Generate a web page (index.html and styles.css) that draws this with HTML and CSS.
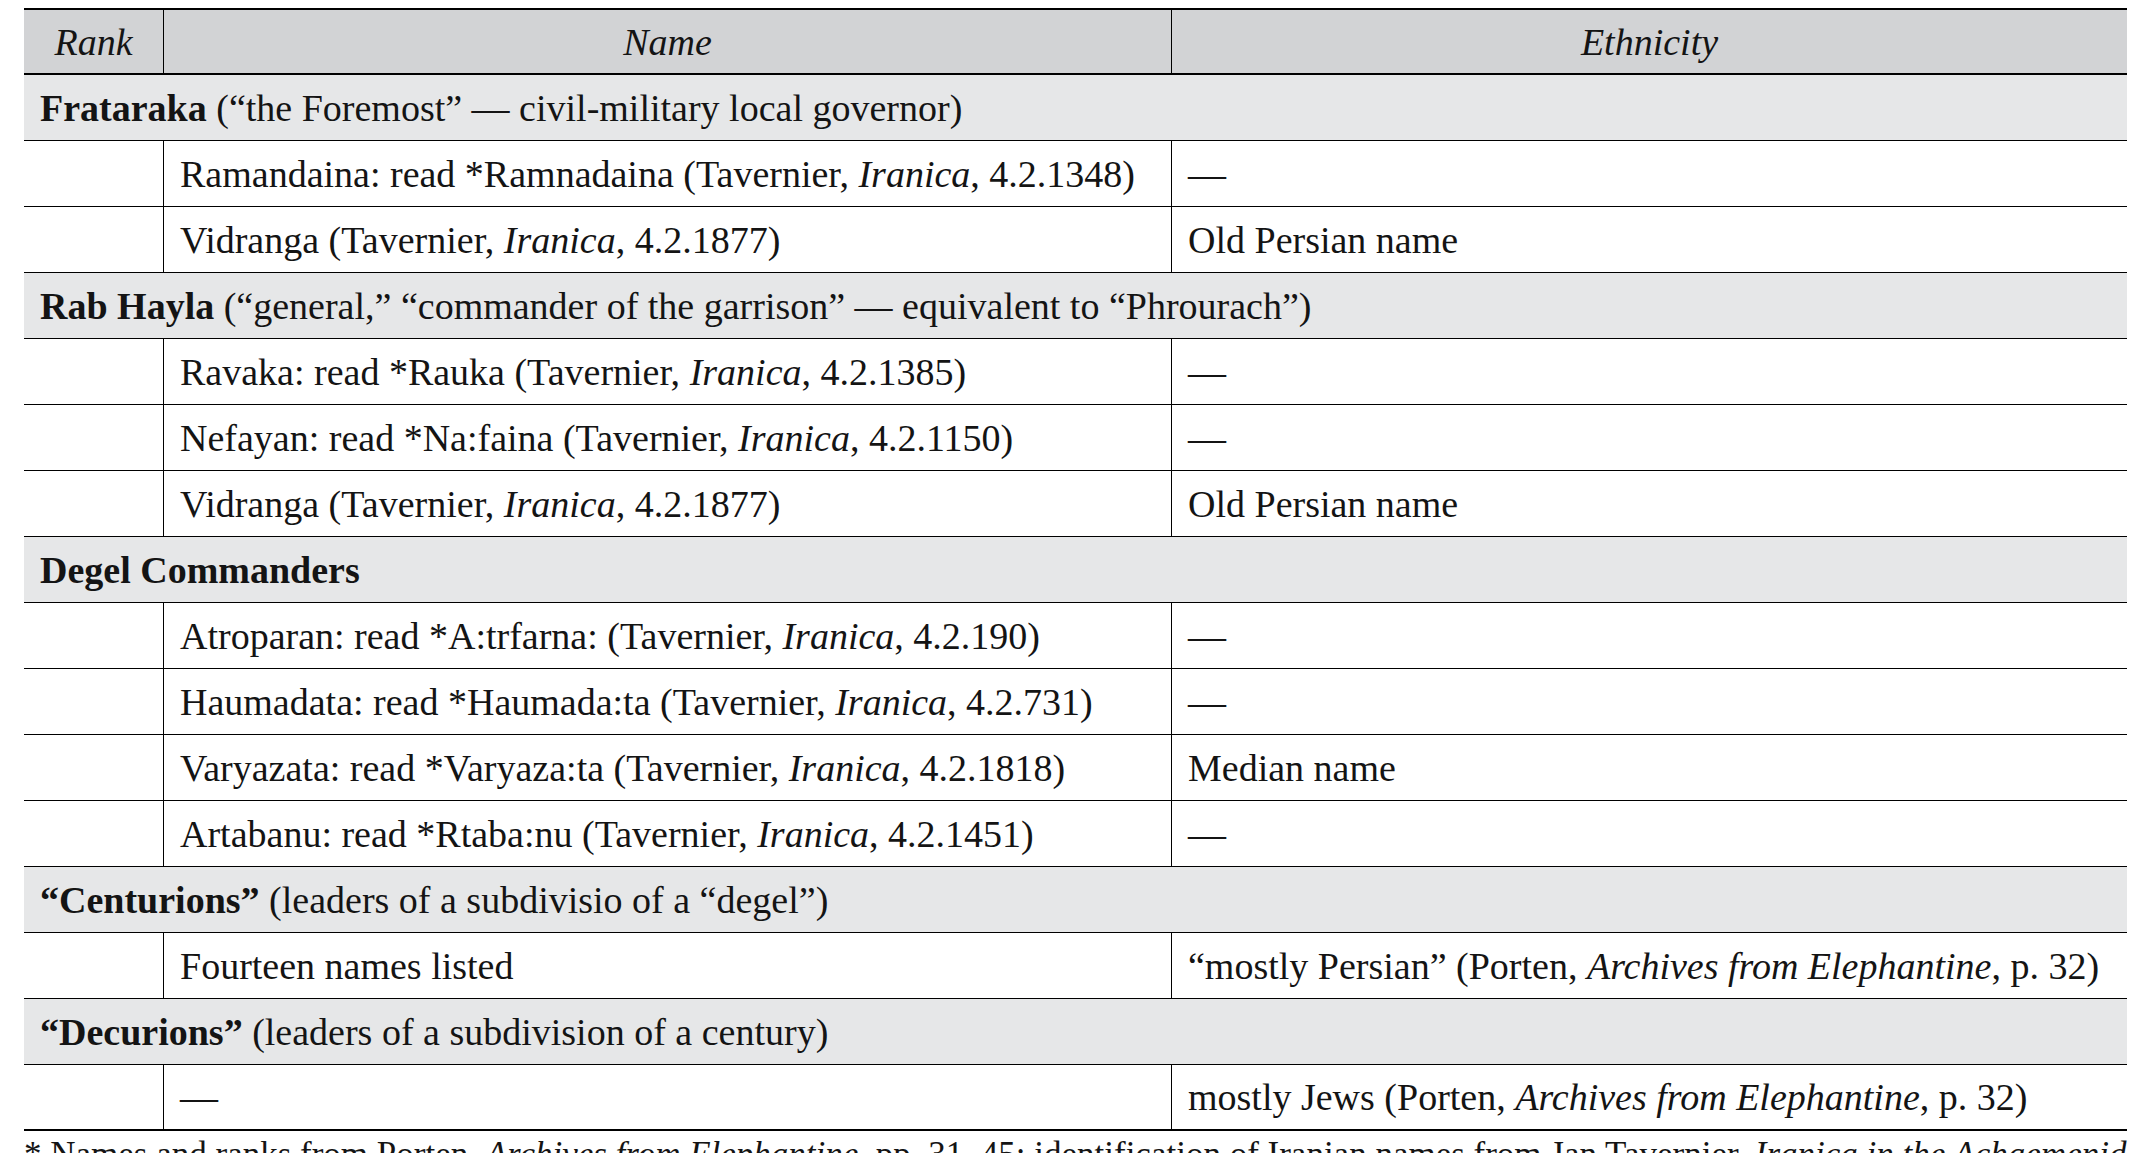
FILE: index.html
```html
<!DOCTYPE html>
<html lang="en">
<head>
<meta charset="utf-8">
<title>Ranks and Names</title>
<link rel="stylesheet" href="styles.css">
</head>
<body>
<div class="page">
<table class="ranks">
  <colgroup>
    <col class="c-rank">
    <col class="c-name">
    <col class="c-eth">
  </colgroup>
  <thead>
    <tr><th>Rank</th><th class="vl">Name</th><th class="vl">Ethnicity</th></tr>
  </thead>
  <tbody>
    <tr class="sec"><td colspan="3"><b>Frataraka</b> (“the Foremost” — civil-military local governor)</td></tr>
    <tr><td></td><td class="vl">Ramandaina: read *Ramnadaina (Tavernier, <i>Iranica</i>, 4.2.1348)</td><td class="vl">—</td></tr>
    <tr><td></td><td class="vl">Vidranga (Tavernier, <i>Iranica</i>, 4.2.1877)</td><td class="vl">Old Persian name</td></tr>
    <tr class="sec"><td colspan="3"><b>Rab Hayla</b> (“general,” “commander of the garrison” — equivalent to “Phrourach”)</td></tr>
    <tr><td></td><td class="vl">Ravaka: read *Rauka (Tavernier, <i>Iranica</i>, 4.2.1385)</td><td class="vl">—</td></tr>
    <tr><td></td><td class="vl">Nefayan: read *Na:faina (Tavernier, <i>Iranica</i>, 4.2.1150)</td><td class="vl">—</td></tr>
    <tr><td></td><td class="vl">Vidranga (Tavernier, <i>Iranica</i>, 4.2.1877)</td><td class="vl">Old Persian name</td></tr>
    <tr class="sec"><td colspan="3"><b>Degel Commanders</b></td></tr>
    <tr><td></td><td class="vl">Atroparan: read *A:trfarna: (Tavernier, <i>Iranica</i>, 4.2.190)</td><td class="vl">—</td></tr>
    <tr><td></td><td class="vl">Haumadata: read *Haumada:ta (Tavernier, <i>Iranica</i>, 4.2.731)</td><td class="vl">—</td></tr>
    <tr><td></td><td class="vl">Varyazata: read *Varyaza:ta (Tavernier, <i>Iranica</i>, 4.2.1818)</td><td class="vl">Median name</td></tr>
    <tr><td></td><td class="vl">Artabanu: read *Rtaba:nu (Tavernier, <i>Iranica</i>, 4.2.1451)</td><td class="vl">—</td></tr>
    <tr class="sec"><td colspan="3"><b>“Centurions”</b> (leaders of a subdivisio of a “degel”)</td></tr>
    <tr><td></td><td class="vl">Fourteen names listed</td><td class="vl">“mostly Persian” (Porten, <i>Archives from Elephantine</i>, p. 32)</td></tr>
    <tr class="sec"><td colspan="3"><b>“Decurions”</b> (leaders of a subdivision of a century)</td></tr>
    <tr class="last"><td></td><td class="vl">—</td><td class="vl">mostly Jews (Porten, <i>Archives from Elephantine</i>, p. 32)</td></tr>
  </tbody>
</table>
<p class="note">* Names and ranks from Porten, <i>Archives from Elephantine</i>, pp. 31–45; identification of Iranian names from Jan Tavernier, <i>Iranica in the Achaemenid Period</i> (ca. 550–330 B.C.).</p>
</div>
</body>
</html>
```

FILE: styles.css
```css
html, body {
  margin: 0;
  padding: 0;
  overflow: hidden;
  background: #ffffff;
}

.page {
  padding: 8px 26px 0 24px;
  font-family: "Liberation Serif", "Times New Roman", serif;
  font-size: 38px;
  color: #141414;
}

.ranks {
  width: 2103px;
  table-layout: fixed;
  border-collapse: separate;
  border-spacing: 0;
}

.c-rank { width: 139px; }
.c-name { width: 1008px; }
.c-eth { width: 956px; }

.ranks th {
  height: 63px;
  padding: 0 16px;
  background: #d2d3d5;
  font-weight: normal;
  font-style: italic;
  text-align: center;
  vertical-align: middle;
  border-top: 2px solid #000;
  border-bottom: 2px solid #000;
  white-space: nowrap;
}

.ranks td {
  height: 65px;
  padding: 0 16px;
  text-align: left;
  vertical-align: middle;
  border-bottom: 1px solid #000;
  white-space: nowrap;
}

.ranks .vl {
  border-left: 1px solid #000;
}

.ranks tr.sec td {
  background: #e6e7e8;
}

.ranks tr.last td {
  height: 64px;
  border-bottom: 2px solid #000;
}

.note {
  width: 2103px;
  margin: 4px 0 0 0;
  font-size: 35px;
}
```
